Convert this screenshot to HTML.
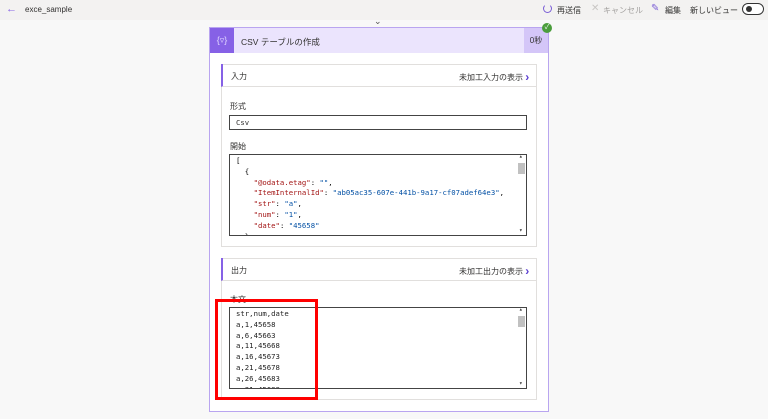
<!DOCTYPE html>
<html><head><meta charset="utf-8"><style>
*{box-sizing:border-box;margin:0;padding:0}
body{width:768px;height:419px;background:#f8f8f8;font-family:"Liberation Sans","Noto Sans CJK JP",sans-serif;font-size:8px;color:#323130;position:relative;overflow:hidden}
.abs{position:absolute}
.top{left:0;top:0;width:768px;height:20px;background:#f3f2f1}
.mono{font-family:"DejaVu Sans Mono","Liberation Mono",monospace;font-size:7.3px;line-height:10.8px}
.sec{background:#fff;border:1px solid #e1dfdd}
.shead{height:23px;border-bottom:1px solid #e1dfdd;border-left:2px solid #8661e6}
.box{border:1px solid #444;background:#fff}
.sb{position:absolute;right:0;top:0;width:9px;bottom:0;background:#fff}
.sb i{position:absolute;left:1px;top:8px;width:7px;height:11px;background:#c1c1c1}
.sb:before{content:"▴";position:absolute;left:2px;top:-3px;font-size:6px;color:#333}
.sb:after{content:"▾";position:absolute;left:2px;bottom:-2px;font-size:6px;color:#333}
.k{color:#a31515}.v{color:#0451a5}
.chev{color:#5b3fd0;font-size:12px;font-weight:bold;position:relative;top:1px}
</style></head><body>
<div class="abs top"></div>
<div class="abs" style="left:6px;top:3px;color:#8661e6;font-size:11px">←</div>
<div class="abs" style="left:25px;top:5px">exce_sample</div>
<div class="abs" style="left:543px;top:4px;width:9px;height:9px;border:1.5px solid #7b5fd6;border-radius:50%;border-top-color:transparent"></div>
<div class="abs" style="left:557px;top:5px">再送信</div>
<div class="abs" style="left:591px;top:3px;color:#c8c6c4;font-size:10px">✕</div>
<div class="abs" style="left:603px;top:5px;color:#a19f9d">キャンセル</div>
<div class="abs" style="left:651px;top:3px;color:#7b5fd6;font-size:10px">✎</div>
<div class="abs" style="left:665px;top:5px">編集</div>
<div class="abs" style="left:690px;top:5px">新しいビュー</div>
<div class="abs" style="left:742px;top:3px;width:22px;height:12px;border:1px solid #333;border-radius:6px;background:#fff"><div style="position:absolute;left:3px;top:2px;width:6px;height:6px;border-radius:50%;background:#333"></div></div>
<div class="abs" style="left:374px;top:16px;font-size:9px;color:#555">⌄</div>

<div class="abs" style="left:209px;top:27px;width:340px;height:385px;background:#fff;border:1px solid #b9a5f0"></div>
<div class="abs" style="left:210px;top:28px;width:338px;height:25px;background:#ebe4fd"></div>
<div class="abs" style="left:210px;top:28px;width:24px;height:25px;background:#8661e6;color:#e0d6ff;font-size:9px;text-align:center;line-height:25px">{▿}</div>
<div class="abs" style="left:241px;top:36px;font-size:8.5px">CSV テーブルの作成</div>
<div class="abs" style="left:524px;top:28px;width:24px;height:25px;background:#d4c6f8;text-align:center;line-height:25px">0秒</div>
<div class="abs" style="left:542px;top:23px;width:10px;height:10px;border-radius:50%;background:#4a9d3c;color:#fff;font-size:7px;text-align:center;line-height:10px">✓</div>

<div class="abs sec" style="left:221px;top:64px;width:316px;height:183px"></div>
<div class="abs shead" style="left:221px;top:64px;width:316px"></div>
<div class="abs" style="left:231px;top:71px">入力</div>
<div class="abs" style="left:459px;top:69px">未加工入力の表示 <span class="chev">›</span></div>
<div class="abs" style="left:230px;top:101px">形式</div>
<div class="abs box mono" style="left:229px;top:115px;width:298px;height:15px;padding-left:6px;line-height:13px">Csv</div>
<div class="abs" style="left:230px;top:141px">開始</div>
<div class="abs box mono" style="left:229px;top:154px;width:298px;height:82px;padding:1px 6px;overflow:hidden;color:#000">[<br>&nbsp;&nbsp;{<br>&nbsp;&nbsp;&nbsp;&nbsp;<span class="k">"@odata.etag"</span>: <span class="v">""</span>,<br>&nbsp;&nbsp;&nbsp;&nbsp;<span class="k">"ItemInternalId"</span>: <span class="v">"ab05ac35-607e-441b-9a17-cf07adef64e3"</span>,<br>&nbsp;&nbsp;&nbsp;&nbsp;<span class="k">"str"</span>: <span class="v">"a"</span>,<br>&nbsp;&nbsp;&nbsp;&nbsp;<span class="k">"num"</span>: <span class="v">"1"</span>,<br>&nbsp;&nbsp;&nbsp;&nbsp;<span class="k">"date"</span>: <span class="v">"45658"</span><br>&nbsp;&nbsp;},<div class="sb"><i></i></div></div>

<div class="abs sec" style="left:221px;top:258px;width:316px;height:142px"></div>
<div class="abs shead" style="left:221px;top:258px;width:316px"></div>
<div class="abs" style="left:231px;top:265px">出力</div>
<div class="abs" style="left:459px;top:263px">未加工出力の表示 <span class="chev">›</span></div>
<div class="abs" style="left:230px;top:294px">本文</div>
<div class="abs box mono" style="left:229px;top:307px;width:298px;height:82px;padding:1px 6px;overflow:hidden;color:#222">str,num,date<br>a,1,45658<br>a,6,45663<br>a,11,45668<br>a,16,45673<br>a,21,45678<br>a,26,45683<br>a,31,45688<div class="sb"><i></i></div></div>
<div class="abs" style="left:215px;top:299px;width:103px;height:101px;border:3px solid #f00"></div>
</body></html>
